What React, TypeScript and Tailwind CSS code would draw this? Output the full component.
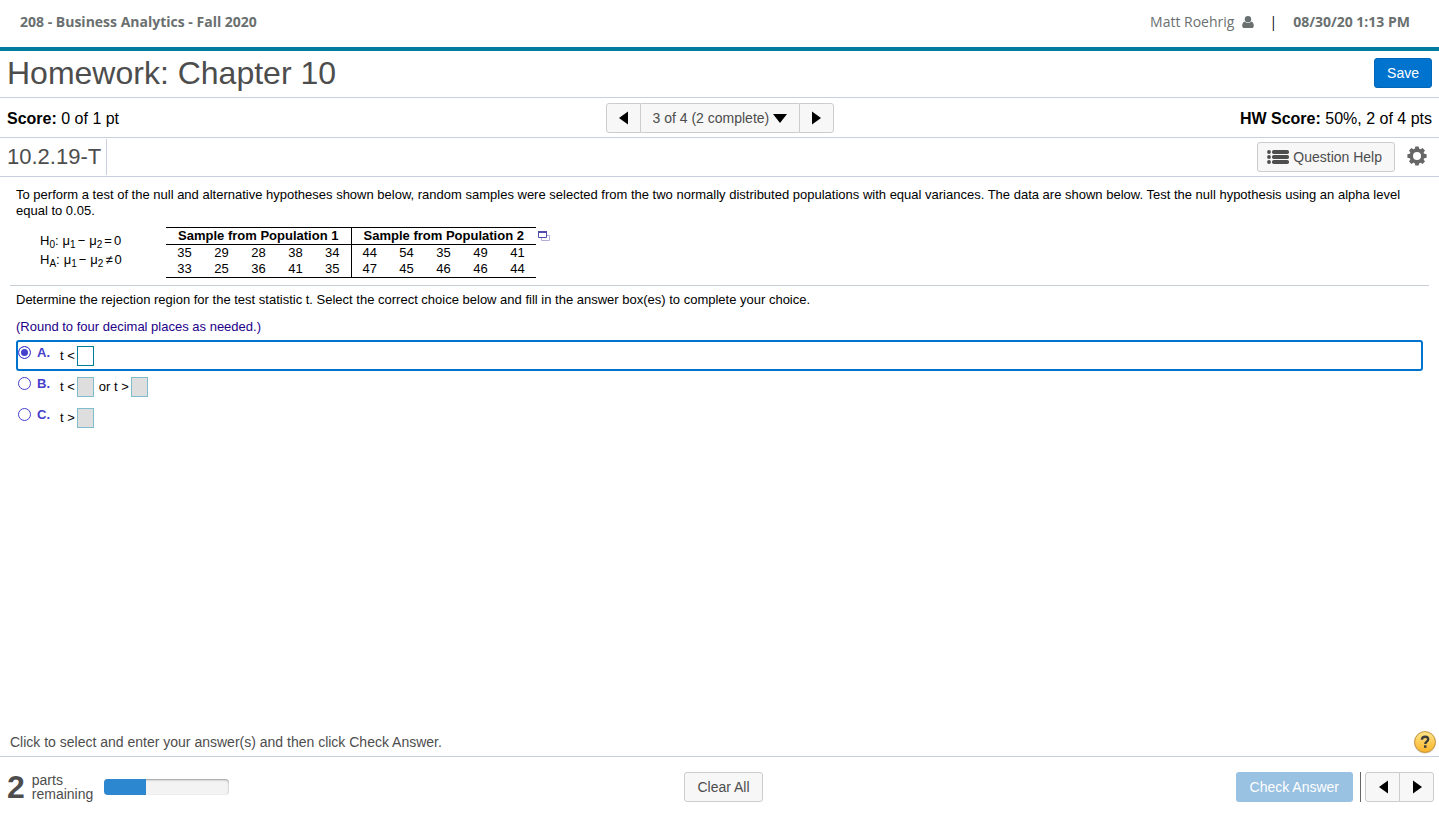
import type { ReactNode } from "react";
import { useState } from "react";

const populations = [
  { name: "Sample from Population 1", rows: [[35, 29, 28, 38, 34], [33, 25, 36, 41, 35]] },
  { name: "Sample from Population 2", rows: [[44, 54, 35, 49, 41], [47, 45, 46, 46, 44]] },
];

function Triangle({ direction }: { direction: "left" | "right" | "down" }) {
  if (direction === "down") {
    return (
      <svg width="14" height="10" viewBox="0 0 14 10" aria-hidden="true">
        <path d="M0 1h14L7 10z" />
      </svg>
    );
  }
  return (
    <svg width="10" height="14" viewBox="0 0 10 14" aria-hidden="true">
      <path d={direction === "left" ? "M10 .5v13L1 7z" : "M1 .5v13l9-6.5z"} />
    </svg>
  );
}

function UserIcon() {
  return (
    <svg width="12" height="12" viewBox="0 0 12 12" fill="currentColor" aria-hidden="true">
      <circle cx="6" cy="3.2" r="3.2" />
      <path d="M2.8 5.4C1.100 5.900.2 7.700.2 9.700c0 1.400.9 2.300 2.100 2.300h7.400c1.200 0 2.100-.9 2.100-2.300 0-2-.9-3.800-2.600-4.300C8.200 6.400 7.200 6.900 6 6.900S3.800 6.400 2.800 5.400z" />
    </svg>
  );
}

function ListIcon() {
  return (
    <svg width="22" height="14" viewBox="0 0 22 14" fill="#4d4d4d" aria-hidden="true">
      {[2, 7, 12].map((y) => (
        <g key={y}>
          <circle cx="2" cy={y} r="1.9" />
          <rect x="5" y={y - 2} width="17" height="4" rx="1.8" />
        </g>
      ))}
    </svg>
  );
}

function GearIcon() {
  return (
    <svg width="20" height="20" viewBox="-10 -10 20 20" fill="#666" aria-hidden="true">
      <circle r="5.700" fill="none" stroke="#666" strokeWidth="3.400" />
      {[0, 45, 90, 135, 180, 225, 270, 315].map((angle) => (
        <path key={angle} d="M-2.400-6.500-1.700-9.600h3.400l.7 3.100z" transform={`rotate(${angle})`} />
      ))}
    </svg>
  );
}

function PopupIcon() {
  return (
    <svg width="12" height="11" viewBox="0 0 12 11" fill="none" aria-hidden="true">
      <path d="M9 4.500h2.500v5h-8V7" stroke="#b3b0dc" />
      <path d="M.5 1v5.500h8V1" fill="#fff" stroke="#4f4cab" />
      <path d="M0 1h9" stroke="#4f4cab" strokeWidth="2" />
    </svg>
  );
}

function HelpCoin() {
  return (
    <svg width="24" height="24" viewBox="0 0 24 24" aria-hidden="true">
      <defs>
        <linearGradient id="coin" x1="0" y1="0" x2="0" y2="1">
          <stop offset="0" stopColor="#ffe58a" />
          <stop offset="1" stopColor="#fbb426" />
        </linearGradient>
      </defs>
      <circle cx="12" cy="12.500" r="11" fill="#d8d0c0" />
      <circle cx="12" cy="12" r="10.400" fill="url(#coin)" stroke="#c9973c" />
      <path d="M8.900 9.800c0-2 1.300-3.100 3.200-3.100s3.100 1.100 3.100 2.600c0 2.300-2.900 2.400-2.900 4.700" fill="none" stroke="#3d3d3d" strokeWidth="2.400" />
      <rect x="11" y="15.300" width="2.500" height="2.500" fill="#3d3d3d" />
    </svg>
  );
}

function Sub({ children }: { children: ReactNode }) {
  return <sub className="relative top-[3px] bottom-auto text-[10px]">{children}</sub>;
}

function Hypothesis({ label, sign }: { label: string; sign: string }) {
  return (
    <p className="flex h-[19px] items-baseline">
      H<Sub>{label}</Sub>:
      <span className="ml-1">μ</span>
      <Sub>1</Sub>
      <span className="ml-0.5">−</span>
      <span className="ml-1">μ</span>
      <Sub>2</Sub>
      <span className="ml-0.5">{sign}</span>
      <span className="ml-0.5">0</span>
    </p>
  );
}

function AnswerBox({ label, disabled }: { label: string; disabled: boolean }) {
  return (
    <input
      type="text"
      aria-label={label}
      disabled={disabled}
      className="h-5 w-[17px] border border-[#007c9c] bg-white text-center text-[13px] outline-none disabled:border-[#7fbdcd] disabled:bg-[#dedede]"
    />
  );
}

function Choice({ letter, selected, onSelect, children }: {
  letter: string;
  selected: boolean;
  onSelect: () => void;
  children: ReactNode;
}) {
  return (
    <div className={`flex h-[31px] items-start gap-1.5 rounded-[3px] pt-1.5 pl-0.5 ${selected ? "outline-2 outline-[#0073cf] -outline-offset-2" : ""}`}>
      <input
        id={`choice-${letter}`}
        type="radio"
        name="choice"
        checked={selected}
        onChange={onSelect}
        className="size-[13px] appearance-none rounded-full border border-[#4540cc] bg-white checked:bg-[#4540cc] checked:shadow-[inset_0_0_0_2px_#fff]"
      />
      <label htmlFor={`choice-${letter}`} className="w-[17px] text-[13px] leading-[13px] font-bold text-[#4540cc]">
        {letter}.
      </label>
      <div className="flex h-5 items-center">{children}</div>
    </div>
  );
}

function StepButton({ direction, label, className }: { direction: "left" | "right"; label: string; className: string }) {
  return (
    <button type="button" aria-label={label} className={`flex h-[30px] w-[35px] items-center justify-center border border-[#ccc] bg-[#f7f7f7] pt-px ${className}`}>
      <Triangle direction={direction} />
    </button>
  );
}

export default function App() {
  const [choice, setChoice] = useState("A");

  return (
    <div className="flex min-h-screen flex-col bg-white font-['Liberation_Sans',Arial,sans-serif] text-black">
      <header className="flex h-[51px] items-center justify-between border-b-4 border-[#007c9f] pr-[29px] pb-[3px] pl-5 font-['Open_Sans',sans-serif] text-sm text-[#6a7070]">
        <span className="font-bold">208 - Business Analytics - Fall 2020</span>
        <div className="flex items-center">
          <a href="#profile" className="flex items-center gap-2">
            Matt Roehrig
            <UserIcon />
          </a>
          <span className="mr-4 ml-[15px] text-black">|</span>
          <span className="font-bold">08/30/20 1:13 PM</span>
        </div>
      </header>

      <div className="flex h-[47px] items-center justify-between border-b border-[#c8cfdf] px-[7px] pb-0.5">
        <h1 className="text-[32px] leading-10 text-[#4d4d4d]">Homework: Chapter 10</h1>
        <button type="button" className="h-[30px] rounded-[3px] border border-[#0067b8] bg-[#0073cf] px-3 text-sm text-white">
          Save
        </button>
      </div>

      <div className="grid h-10 grid-cols-[1fr_auto_1fr] items-center border-b border-[#c8cfdf] px-[7px] text-base">
        <p className="pt-0.5"><b>Score:</b> 0 of 1 pt</p>
        <div className="flex">
          <StepButton direction="left" label="Previous question" className="rounded-l-[3px]" />
          <div className="relative">
            <select aria-label="Question" className="h-[30px] w-[158px] appearance-none border-y border-[#ccc] bg-[#f7f7f7] pl-3 text-sm text-[#4d4d4d]">
              <option>3 of 4 (2 complete)</option>
            </select>
            <span className="pointer-events-none absolute inset-y-0 right-3 flex items-center">
              <Triangle direction="down" />
            </span>
          </div>
          <StepButton direction="right" label="Next question" className="rounded-r-[3px]" />
        </div>
        <p className="pt-0.5 text-right"><b>HW Score:</b> 50%, 2 of 4 pts</p>
      </div>

      <div className="flex h-[39px] items-center justify-between border-b border-[#c8cfdf] pr-3 pl-[7px]">
        <h2 className="border-r border-[#c8cfdf] pr-[5px] text-[22px] leading-9 text-[#4d4d4d]">10.2.19-T</h2>
        <div className="flex items-center gap-3">
          <button type="button" className="flex h-[30px] items-center gap-1 rounded-[3px] border border-[#ccc] bg-[#f7f7f7] pr-3 pl-[9px] text-sm text-[#4d4d4d]">
            <ListIcon />
            Question Help
          </button>
          <button type="button" aria-label="Settings" className="pb-0.5">
            <GearIcon />
          </button>
        </div>
      </div>

      <main className="grow text-[13px] leading-4">
        <section className="px-4 pt-2.5">
          <p>
            To perform a test of the null and alternative hypotheses shown below, random samples were selected from the two
            normally distributed populations with equal variances. The data are shown below. Test the null hypothesis using
            an alpha level equal to 0.05.
          </p>
          <div className="mt-2 flex items-start pl-6">
            <div className="w-[126px] pt-1.5">
              <Hypothesis label="0" sign="=" />
              <Hypothesis label="A" sign="≠" />
            </div>
            <table className="w-[370px] table-fixed border-collapse border-y border-black text-center">
              <thead>
                <tr className="h-[17px] border-b border-black">
                  {populations.map((population) => (
                    <th key={population.name} colSpan={5} className="p-0 not-last:border-r">{population.name}</th>
                  ))}
                </tr>
              </thead>
              <tbody>
                {[0, 1].map((row) => (
                  <tr key={row} className="h-4">
                    {populations.map((population, p) =>
                      population.rows[row].map((value, i) => (
                        <td key={`${p}-${i}`} className={p === 0 && i === 4 ? "border-r border-black p-0" : "p-0"}>{value}</td>
                      )),
                    )}
                  </tr>
                ))}
              </tbody>
            </table>
            <button type="button" aria-label="Open data table" className="mt-1 ml-0.5">
              <PopupIcon />
            </button>
          </div>
        </section>

        <hr className="mx-2.5 mt-[7px] border-[#c8ced8]" />

        <section className="px-4 pt-1.5">
          <p>
            Determine the rejection region for the test statistic t. Select the correct choice below and fill in the answer
            box(es) to complete your choice.
          </p>
          <p className="mt-[11px] text-[#220088]">(Round to four decimal places as needed.)</p>
          <div role="radiogroup" aria-label="Rejection region" className="mt-[5px]">
            <Choice letter="A" selected={choice === "A"} onSelect={() => setChoice("A")}>
              <span className="mr-0.5">t &lt;</span>
              <AnswerBox label="t less than" disabled={choice !== "A"} />
            </Choice>
            <Choice letter="B" selected={choice === "B"} onSelect={() => setChoice("B")}>
              <span className="mr-0.5">t &lt;</span>
              <AnswerBox label="t less than, lower bound" disabled={choice !== "B"} />
              <span className="mr-0.5 ml-[5px]">or t &gt;</span>
              <AnswerBox label="t greater than, upper bound" disabled={choice !== "B"} />
            </Choice>
            <Choice letter="C" selected={choice === "C"} onSelect={() => setChoice("C")}>
              <span className="mr-0.5">t &gt;</span>
              <AnswerBox label="t greater than" disabled={choice !== "C"} />
            </Choice>
          </div>
        </section>
      </main>

      <div className="flex h-7 items-center justify-between pr-0.5 pl-2.5 text-sm text-[#4d4d4d]">
        <p>Click to select and enter your answer(s) and then click Check Answer.</p>
        <button type="button" aria-label="Help">
          <HelpCoin />
        </button>
      </div>

      <footer className="grid h-[62px] grid-cols-[1fr_auto_1fr] items-center border-t border-[#c8cfdf] pr-[5px] pb-0.5 pl-[7px] text-sm text-[#4d4d4d]">
        <div className="flex items-center">
          <b className="text-[32px] leading-8">2</b>
          <p className="ml-[7px] leading-[14px]">parts<br />remaining</p>
          <div
            role="progressbar"
            aria-label="Parts complete"
            aria-valuenow={1}
            aria-valuemax={3}
            className="ml-[11px] h-4 w-[125px] overflow-hidden rounded-sm bg-[#f3f3f3] shadow-[inset_0_1px_2px_#999]"
          >
            <div className="h-full w-1/3 bg-[#2d87d0]" />
          </div>
        </div>
        <button type="button" className="ml-1.5 h-[30px] rounded-[3px] border border-[#ccc] bg-[#f7f7f7] px-3">Clear All</button>
        <div className="flex justify-end">
          <button type="button" className="h-[30px] rounded-[3px] bg-[#99c1e1] px-3.5 text-white">Check Answer</button>
          <div className="mr-1 ml-[7px] w-px bg-[#666]" />
          <StepButton direction="left" label="Previous part" className="rounded-l-[3px]" />
          <StepButton direction="right" label="Next part" className="-ml-px rounded-r-[3px]" />
        </div>
      </footer>
    </div>
  );
}
